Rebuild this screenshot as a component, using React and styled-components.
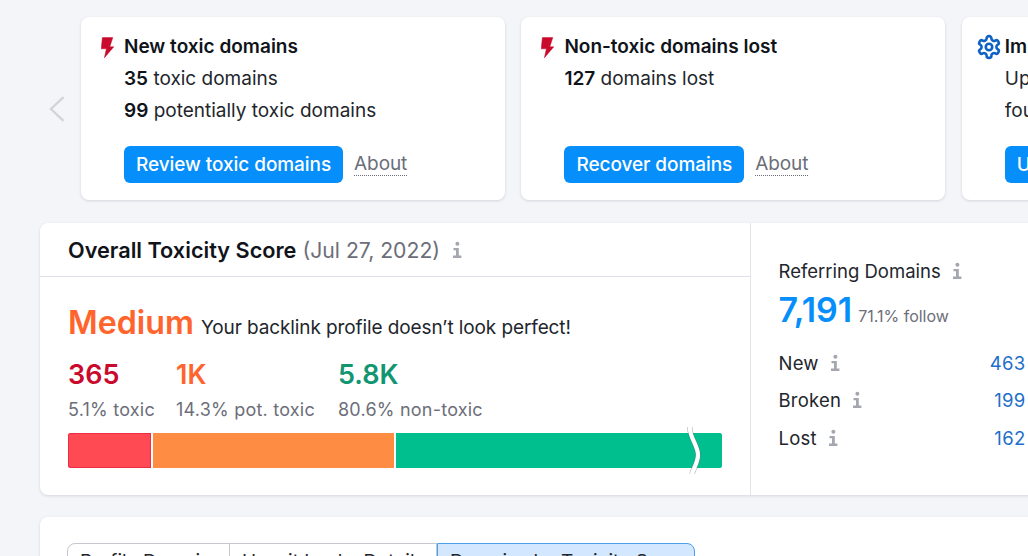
import React from "react";
import styled, { createGlobalStyle } from "styled-components";

const GlobalStyle = createGlobalStyle`
  html, body {
    margin: 0;
    padding: 0;
    height: 556px;
    overflow: hidden;
    background: #f4f5f9;
    font-family: Inter, "Liberation Sans", sans-serif;
    color: #181e26;
  }
`;

const Page = styled.div`
  width: 1028px;
  height: 556px;
  overflow: hidden;
  padding: 17px 0 0 40px;
  box-sizing: border-box;
`;

const Carousel = styled.div`
  display: flex;
  align-items: center;
  height: 183px;
`;

const Prev = styled.div`
  width: 41px;
  flex: none;
  display: flex;
  align-items: center;
  padding-left: 8px;
  box-sizing: border-box;
  height: 36px;
  margin-top: 1px;
`;

const Cards = styled.div`
  display: flex;
  gap: 16.4px;
`;

const Card = styled.div`
  width: 424px;
  height: 183px;
  flex: none;
  box-sizing: border-box;
  padding: 19px 0 17px 18px;
  background: #fff;
  border-radius: 8px;
  box-shadow: 0 1px 3px rgba(40, 50, 80, 0.16);
  display: flex;
  gap: 7px;
`;

const CardIcon = styled.div`
  width: 18px;
  height: 22px;
  flex: none;
  display: flex;
  justify-content: center;
  align-items: center;
`;

const CardBody = styled.div`
  display: flex;
  flex-direction: column;
  flex: 1;
  min-width: 0;
  white-space: nowrap;
  overflow: hidden;
`;

const CardTitle = styled.div`
  font-size: 19px;
  line-height: 22px;
  font-weight: 600;
  color: #10141a;
  margin-bottom: 10px;
`;

const CardLine = styled.div`
  font-size: 19px;
  line-height: 22px;
  font-weight: 400;
  margin-bottom: 10px;
  color: #22262c;

  b {
    font-weight: 600;
    color: #10141a;
  }
`;

const Actions = styled.div`
  margin-top: auto;
  display: flex;
  align-items: center;
  gap: 11px;
`;

const Button = styled.div`
  height: 37px;
  line-height: 37px;
  padding: 0 12px;
  border-radius: 6px;
  background: #068efa;
  color: #fff;
  font-size: 19px;
  font-weight: 500;
  letter-spacing: -0.06px;
`;

const About = styled.div`
  font-size: 19px;
  line-height: 22px;
  font-weight: 400;
  color: #6c6e79;
  letter-spacing: -0.1px;
  border-bottom: 1px dotted #6c6e79;
`;

const ScorePanel = styled.div`
  margin-top: 23px;
  width: 1040px;
  height: 272px;
  display: flex;
  background: #fff;
  border-radius: 8px;
  box-shadow: 0 1px 3px rgba(40, 50, 80, 0.16);
`;

const ScoreMain = styled.div`
  width: 710px;
  flex: none;
  display: flex;
  flex-direction: column;
  border-right: 1px solid #e4e5ea;
`;

const ScoreHeader = styled.div`
  height: 53px;
  flex: none;
  display: flex;
  align-items: center;
  gap: 6px;
  padding-left: 28px;
  border-bottom: 1px solid #e0e1e9;
  font-weight: 400;
  white-space: nowrap;
`;

const ScoreTitle = styled.span`
  font-size: 21.7px;
  font-weight: 600;
  color: #10141a;
`;

const ScoreDate = styled.span`
  font-size: 21.2px;
  color: #6c6e79;
  margin-right: 6px;
`;

const ScoreBody = styled.div`
  padding: 26px 28px 0 28px;
  flex: 1;
`;

const Verdict = styled.div`
  display: flex;
  align-items: baseline;
  gap: 7px;
  white-space: nowrap;
`;

const VerdictLabel = styled.span`
  font-size: 32.2px;
  line-height: 40px;
  font-weight: 600;
  color: #ff642d;
`;

const VerdictText = styled.span`
  font-size: 19px;
  color: #22262c;
  letter-spacing: -0.1px;
`;

const Stats = styled.div`
  display: flex;
  margin-top: 16px;
`;

const Stat = styled.div`
  width: ${(p) => p.$w}px;
  flex: none;
  white-space: nowrap;
`;

const StatValue = styled.div`
  font-size: 27px;
  line-height: 31px;
  font-weight: 600;
  color: ${(p) => p.$color};
`;

const StatLabel = styled.div`
  margin-top: 9px;
  font-size: 18px;
  line-height: 22px;
  color: #6c6e79;
  letter-spacing: 0.22px;
`;

const Bar = styled.div`
  position: relative;
  display: flex;
  gap: 1.5px;
  height: 35px;
  width: 654px;
  margin-top: 12px;
`;

const Segment = styled.div`
  width: ${(p) => p.$w}px;
  flex: ${(p) => (p.$w ? "none" : "1")};
  background: ${(p) => p.$color};
  border-radius: ${(p) => p.$radius};
  box-shadow: inset 0 0 0 1px ${(p) => p.$edge};
`;

const BarBreak = styled.svg`
  position: absolute;
  left: 612px;
  top: -6px;
`;

const SidePanel = styled.div`
  flex: 1;
  padding: 36px 0 0 27.5px;
  box-sizing: border-box;
`;

const SideTitle = styled.div`
  display: flex;
  align-items: center;
  gap: 11px;
  font-size: 18.5px;
  line-height: 24px;
  color: #22262c;
`;

const SideTotal = styled.div`
  display: flex;
  align-items: baseline;
  gap: 6px;
  margin-top: 7px;
`;

const TotalValue = styled.span`
  font-size: 34px;
  line-height: 40px;
  font-weight: 600;
  color: #068efa;
`;

const TotalNote = styled.span`
  font-size: 16px;
  color: #6c6e79;
`;

const SideRows = styled.div`
  margin-top: 20.6px;
  width: 247px;
  display: flex;
  flex-direction: column;
  gap: 13.5px;
`;

const SideRow = styled.div`
  display: flex;
  align-items: center;
  height: 24px;
  font-size: 18.5px;
  color: #22262c;
`;

const RowName = styled.span`
  display: flex;
  align-items: center;
  gap: 11px;
  letter-spacing: 0.2px;
`;

const RowValue = styled.span`
  margin-left: auto;
  color: #1d6fc9;
  letter-spacing: 0.3px;
`;

const TabsPanel = styled.div`
  margin-top: 22px;
  width: 1040px;
  height: 100px;
  padding: 26px 0 0 27px;
  box-sizing: border-box;
  background: #fff;
  border-radius: 8px;
  box-shadow: 0 1px 3px rgba(40, 50, 80, 0.16);
`;

const Tabs = styled.div`
  display: flex;
  height: 44px;
`;

const Tab = styled.div`
  width: ${(p) => p.$w}px;
  box-sizing: border-box;
  padding: 7px 0 0 12px;
  font-size: 19px;
  line-height: 22px;
  white-space: nowrap;
  color: #22262c;
  background: ${(p) => (p.$active ? "#d3e8fe" : "#fff")};
  border: 1px solid ${(p) => (p.$active ? "#4b9ee8" : "#c4c7cf")};
  border-left-width: ${(p) => (p.$first || p.$active ? 1 : 0)}px;
  border-radius: ${(p) =>
    p.$first ? "8px 0 0 0" : p.$active ? "0 8px 0 0" : "0"};
`;

const BoltSvg = styled.svg`
  flex: none;
  margin-left: -1px;
`;

const GearSvg = styled.svg`
  flex: none;
`;

const Bolt = () => (
  <BoltSvg width="13" height="21" viewBox="0 0 13 21">
    <path d="M1.4 0.6 L11.8 0.6 L8.8 9.8 L12.8 9.8 L3.4 20.8 L5.4 11.8 L0.2 11.8 Z" fill="#c90a2c" stroke="#c90a2c" strokeWidth="0.5" strokeLinejoin="round" />
  </BoltSvg>
);

const Gear = () => (
  <GearSvg width="26" height="26" viewBox="0 0 24 24" fill="none" stroke="#0e62c4" strokeWidth="2.4" strokeLinecap="round" strokeLinejoin="round">
    <path d="M12.22 2h-.44a2 2 0 0 0-2 2v.18a2 2 0 0 1-1 1.73l-.43.25a2 2 0 0 1-2 0l-.15-.08a2 2 0 0 0-2.73.73l-.22.38a2 2 0 0 0 .73 2.73l.15.1a2 2 0 0 1 1 1.72v.51a2 2 0 0 1-1 1.74l-.15.09a2 2 0 0 0-.73 2.73l.22.38a2 2 0 0 0 2.73.73l.15-.08a2 2 0 0 1 2 0l.43.25a2 2 0 0 1 1 1.73V20a2 2 0 0 0 2 2h.44a2 2 0 0 0 2-2v-.18a2 2 0 0 1 1-1.73l.43-.25a2 2 0 0 1 2 0l.15.08a2 2 0 0 0 2.73-.73l.22-.39a2 2 0 0 0-.73-2.73l-.15-.08a2 2 0 0 1-1-1.74v-.5a2 2 0 0 1 1-1.74l.15-.09a2 2 0 0 0 .73-2.73l-.22-.38a2 2 0 0 0-2.73-.73l-.15.08a2 2 0 0 1-2 0l-.43-.25a2 2 0 0 1-1-1.73V4a2 2 0 0 0-2-2z" />
    <circle cx="12" cy="12" r="3" />
  </GearSvg>
);

const Info = () => (
  <svg width="10" height="18" viewBox="0 0 10 18" fill="#a4a6b0">
    <circle cx="5.4" cy="2.8" r="2" />
    <path d="M1.5 7 H6.8 V14.6 H9.4 V17 H1 V14.6 H4 V9.2 H1.5 Z" />
  </svg>
);

const Chevron = () => (
  <svg width="17" height="26" viewBox="0 0 17 26" fill="none" stroke="#d2d4dc" strokeWidth="2.4">
    <path d="M15.5 1.2 L3 13 L15.5 24.8" />
  </svg>
);

const App = () => {
  return (
    <Page>
      <GlobalStyle />
      <Carousel>
        <Prev>
          <Chevron />
        </Prev>
        <Cards>
          <Card>
            <CardIcon>
              <Bolt />
            </CardIcon>
            <CardBody>
              <CardTitle>New toxic domains</CardTitle>
              <CardLine>
                <b>35</b> toxic domains
              </CardLine>
              <CardLine>
                <b>99</b> potentially toxic domains
              </CardLine>
              <Actions>
                <Button>Review toxic domains</Button>
                <About>About</About>
              </Actions>
            </CardBody>
          </Card>
          <Card>
            <CardIcon>
              <Bolt />
            </CardIcon>
            <CardBody>
              <CardTitle>Non-toxic domains lost</CardTitle>
              <CardLine>
                <b>127</b> domains lost
              </CardLine>
              <Actions>
                <Button>Recover domains</Button>
                <About>About</About>
              </Actions>
            </CardBody>
          </Card>
          <Card>
            <CardIcon>
              <Gear />
            </CardIcon>
            <CardBody>
              <CardTitle>Improve</CardTitle>
              <CardLine>Update</CardLine>
              <CardLine>found</CardLine>
              <Actions>
                <Button>Update</Button>
              </Actions>
            </CardBody>
          </Card>
        </Cards>
      </Carousel>

      <ScorePanel>
        <ScoreMain>
          <ScoreHeader>
            <ScoreTitle>Overall Toxicity Score</ScoreTitle>
            <ScoreDate>(Jul 27, 2022)</ScoreDate>
            <Info />
          </ScoreHeader>
          <ScoreBody>
            <Verdict>
              <VerdictLabel>Medium</VerdictLabel>
              <VerdictText>Your backlink profile doesn’t look perfect!</VerdictText>
            </Verdict>
            <Stats>
              <Stat $w={108}>
                <StatValue $color="#c90a2c">365</StatValue>
                <StatLabel>5.1% toxic</StatLabel>
              </Stat>
              <Stat $w={162}>
                <StatValue $color="#ff642d">1K</StatValue>
                <StatLabel>14.3% pot. toxic</StatLabel>
              </Stat>
              <Stat $w={160}>
                <StatValue $color="#129672">5.8K</StatValue>
                <StatLabel>80.6% non-toxic</StatLabel>
              </Stat>
            </Stats>
            <Bar>
              <Segment $w={83} $color="#ff4953" $edge="#ee2e45" $radius="3px 0 0 3px" />
              <Segment $w={241.5} $color="#ff8c43" $edge="#ff8c43" $radius="0" />
              <Segment $color="#00bf8f" $edge="#00bf8f" $radius="0 3px 3px 0" />
              <BarBreak width="24" height="47" viewBox="0 0 24 47">
                <path d="M10 0 C9 10 18 18 18 28 C18 35 14 40 12 47" fill="none" stroke="#6c6e79" strokeOpacity="0.45" strokeWidth="5.6" />
                <path d="M10 0 C9 10 18 18 18 28 C18 35 14 40 12 47" fill="none" stroke="#fff" strokeWidth="4.2" />
              </BarBreak>
            </Bar>
          </ScoreBody>
        </ScoreMain>
        <SidePanel>
          <SideTitle>
            Referring Domains
            <Info />
          </SideTitle>
          <SideTotal>
            <TotalValue>7,191</TotalValue>
            <TotalNote>71.1% follow</TotalNote>
          </SideTotal>
          <SideRows>
            <SideRow>
              <RowName>
                New <Info />
              </RowName>
              <RowValue>463</RowValue>
            </SideRow>
            <SideRow>
              <RowName>
                Broken <Info />
              </RowName>
              <RowValue>199</RowValue>
            </SideRow>
            <SideRow>
              <RowName>
                Lost <Info />
              </RowName>
              <RowValue>162</RowValue>
            </SideRow>
          </SideRows>
        </SidePanel>
      </ScorePanel>

      <TabsPanel>
        <Tabs>
          <Tab $w={163} $first>Profile Domains</Tab>
          <Tab $w={207}>How it Looks Details</Tab>
          <Tab $w={258} $active>Domains by Toxicity Score</Tab>
        </Tabs>
      </TabsPanel>
    </Page>
  );
};

export default App;
